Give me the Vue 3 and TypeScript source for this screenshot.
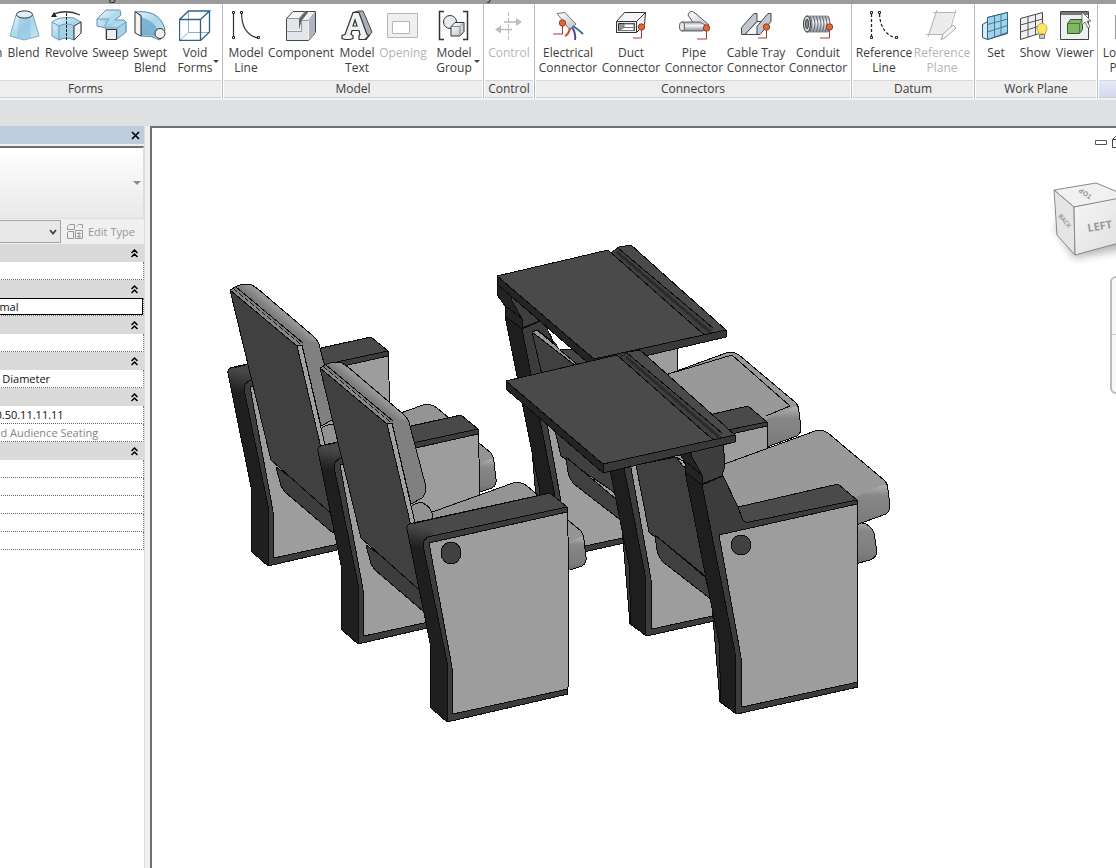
<script setup lang="ts">
import { ref } from 'vue'

interface Tool {
  icon: string
  lines: string[]
  width: number
  disabled?: boolean
  menu?: boolean
}

interface Panel {
  title: string
  tools: Tool[]
  gutter?: number
  active?: boolean
}

const panels: Panel[] = [
  {
    title: 'Forms',
    tools: [
      { icon: 'blend', lines: ['Extrusion'], width: 54 },
      { icon: 'blend', lines: ['Blend'], width: 41 },
      { icon: 'revolve', lines: ['Revolve'], width: 45 },
      { icon: 'sweep', lines: ['Sweep'], width: 43 },
      { icon: 'swept', lines: ['Swept', 'Blend'], width: 36 },
      { icon: 'void', lines: ['Void', 'Forms'], width: 54, menu: true },
    ],
  },
  {
    title: 'Model',
    tools: [
      { icon: 'line', lines: ['Model', 'Line'], width: 46 },
      { icon: 'component', lines: ['Component'], width: 64 },
      { icon: 'text', lines: ['Model', 'Text'], width: 48 },
      { icon: 'opening', lines: ['Opening'], width: 44, disabled: true },
      { icon: 'group', lines: ['Model', 'Group'], width: 58, menu: true },
    ],
  },
  {
    title: 'Control',
    tools: [{ icon: 'control', lines: ['Control'], width: 50, disabled: true }],
  },
  {
    title: 'Connectors',
    gutter: 2,
    tools: [
      { icon: 'electrical', lines: ['Electrical', 'Connector'], width: 62 },
      { icon: 'duct', lines: ['Duct', 'Connector'], width: 64 },
      { icon: 'pipe', lines: ['Pipe', 'Connector'], width: 62 },
      { icon: 'tray', lines: ['Cable Tray', 'Connector'], width: 62 },
      { icon: 'conduit', lines: ['Conduit', 'Connector'], width: 62 },
    ],
  },
  {
    title: 'Datum',
    gutter: 3,
    tools: [
      { icon: 'refline', lines: ['Reference', 'Line'], width: 58 },
      { icon: 'refplane', lines: ['Reference', 'Plane'], width: 58, disabled: true },
    ],
  },
  {
    title: 'Work Plane',
    gutter: 2,
    tools: [
      { icon: 'set', lines: ['Set'], width: 38 },
      { icon: 'show', lines: ['Show'], width: 40 },
      { icon: 'viewer', lines: ['Viewer'], width: 40 },
    ],
  },
  {
    title: '',
    active: true,
    gutter: 1,
    tools: [{ icon: 'load', lines: ['Load into', 'Project'], width: 60 }],
  },
]

interface Row {
  kind: 'head' | 'value'
  value?: string
  focus?: boolean
  locked?: boolean
}

const rows = ref<Row[]>([
  { kind: 'head' },
  { kind: 'value', value: '' },
  { kind: 'head' },
  { kind: 'value', value: 'Normal', focus: true },
  { kind: 'head' },
  { kind: 'value', value: '' },
  { kind: 'head' },
  { kind: 'value', value: 'Use Diameter' },
  { kind: 'head' },
  { kind: 'value', value: '3.40.50.11.11.11' },
  { kind: 'value', value: 'Fixed Audience Seating', locked: true },
  { kind: 'head' },
  { kind: 'value', value: '' },
  { kind: 'value', value: '' },
  { kind: 'value', value: '' },
  { kind: 'value', value: '' },
  { kind: 'value', value: '' },
])
</script>

<template>
  <div class="app">
    <svg class="defs" width="0" height="0" aria-hidden="true">
      <defs>
        <linearGradient id="blue" x1="0" y1="0" x2="1" y2="1">
          <stop offset="0" stop-color="#e6f5fc" />
          <stop offset="0.5" stop-color="#a9d5ea" />
          <stop offset="1" stop-color="#cfe9f5" />
        </linearGradient>
        <linearGradient id="steel" x1="0" y1="0" x2="1" y2="1">
          <stop offset="0" stop-color="#ffffff" />
          <stop offset="1" stop-color="#b9bfc8" />
        </linearGradient>
        <linearGradient id="tube" x1="0" y1="0" x2="0" y2="1">
          <stop offset="0" stop-color="#9aa0a9" />
          <stop offset="0.4" stop-color="#f6f7f9" />
          <stop offset="1" stop-color="#868c96" />
        </linearGradient>
      </defs>
      <symbol id="blend" viewBox="0 0 32 32">
        <path d="M8 6 2 27l14 4 15-4-6-21z" fill="url(#blue)" stroke="#7fa9bf" />
        <path d="M11 9 9 29l7 2 7-2-1-20z" fill="#7fbcdb" opacity=".4" />
        <ellipse cx="16.5" cy="5.5" rx="8" ry="3.6" fill="#dff0f8" stroke="#333" />
      </symbol>
      <symbol id="revolve" viewBox="0 0 32 32">
        <path d="M3 5Q16 0 29 6" fill="none" stroke="#333" stroke-width="1.3" />
        <path d="M0 8 3 3l3 5z" fill="#222" />
        <path d="M1 13Q8 7 23 9l7 4v10l-7 8Q16 27 8 31l-7-4z" fill="url(#blue)" stroke="#6b9bb6" />
        <path d="M1 13l7 4q8-4 15 0v14Q15 27 8 31V17" fill="#a3d1e7" stroke="#6b9bb6" />
        <path d="M23 17l7-4v11l-7 7z" fill="#f5f5f5" stroke="#333" />
        <path d="M15.5 4v27" stroke="#222" stroke-dasharray="3 1" />
      </symbol>
      <symbol id="sweep" viewBox="0 0 32 32">
        <path d="M2 10 11 1h14l1 5-6 5h9l2 2v10l-9 7H11V19l-9-2z" fill="url(#blue)" stroke="#5f93b0" />
        <path d="M2 10h12l-4 6v3h12l9-6v10l-9 7V19" fill="#8fc4df" fill-opacity=".5" stroke="#6ea5c2" />
        <path d="M14 10 25 1" fill="none" stroke="#a9cfe2" />
        <path d="M11.5 20.500h10v10h-10z" fill="#eee" stroke="#333" />
      </symbol>
      <symbol id="swept" viewBox="0 0 32 32">
        <path d="M7 6 1 3q25-3 30 18l-5 10q-9-5-19-4z" fill="url(#blue)" stroke="#4a84a4" />
        <path d="M7 8q12 3 18 14l-4 6q-7-3-14-1z" fill="#5799c0" opacity=".6" />
        <path d="M1 2.500 7 7v20l-6-3z" fill="#f4f4f4" stroke="#333" />
        <circle cx="26" cy="24.500" r="5" fill="#f2f2f2" stroke="#333" />
      </symbol>
      <symbol id="void" viewBox="0 0 32 32">
        <path d="M9.500 23.500 0.500 31.500M9.500 2v21.500h21" fill="none" stroke="#7db5d2" />
        <path d="M.5 10.500h21v21H.5zM.5 10.500l9-8.500h21l-9 8.500M30.500 2v21l-9 8.500" fill="none" stroke="#2e6384" stroke-width="1.300" />
      </symbol>
      <symbol id="line" viewBox="0 0 32 32">
        <path d="M3.500 3v26M11.500 3q0 23 17 26" fill="none" stroke="#333" stroke-width="1.200" />
        <path d="M2.500 2.500h2v2h-2zM2.500 27.500h2v2h-2zM10.500 2.500h2v2h-2zM27.500 27.500h2v2h-2z" fill="#fff" stroke="#222" />
      </symbol>
      <symbol id="component" viewBox="0 0 32 32">
        <path d="M1.500 9.500 8 2.500h22.500v21l-7 8h-22z" fill="#f1f3f5" stroke="#444" />
        <path d="M24 12l6-8v19l-6 7z" fill="#aeb4be" />
        <path d="M2 10h12v11H2z" fill="#e2e5ea" />
        <path d="M2 23h14v-11h7v19H2z" fill="#e2e5ea" />
        <path d="M1.500 9.500h12.500l6-7M1.500 22.500h15v-11l7-9M16.500 11.500h7l7-9" fill="none" stroke="#999" />
        <path d="M14 21 16.500 11.500 23 3 20 3 14 10z" fill="#5d636d" />
      </symbol>
      <symbol id="text" viewBox="0 0 32 32">
        <path d="M12 3.500 17 2h5l9 21-6 8z" fill="#aab0ba" stroke="#444" />
        <path
          fill-rule="evenodd"
          d="M1 29.500v-3l3-1L12 3.500h6l8 22 2 1-4 4h-6v-4l1-1-1-4h-7l-1 4 2 1v3l-3 1H4zM12 17h4l-2-6z"
          fill="#f0f2f5"
          stroke="#333"
          stroke-width="1.200"
        />
      </symbol>
      <symbol id="opening" viewBox="0 0 32 32">
        <path d="M.5 4.500h30v24H.5z" fill="#efefef" stroke="#b7b7b7" />
        <path d="M5.500 12.500h17v12h-17z" fill="#fff" stroke="#b7b7b7" />
      </symbol>
      <symbol id="group" viewBox="0 0 32 32">
        <path d="M6 2.500H1.500v28H6M25 2.500h4.500v28H25" fill="none" stroke="#333" stroke-width="1.500" />
        <circle cx="12" cy="13" r="6.500" fill="#e9edf2" stroke="#333" />
        <path d="M13 17.500l4-4h9v9l-4 4.500h-9z" fill="url(#steel)" stroke="#333" />
        <path d="M13 17.500h9l4-4M22 17.500V27" fill="none" stroke="#888" />
      </symbol>
      <symbol id="control" viewBox="0 0 32 32">
        <path d="M15.500 3v28" stroke="#bbb" stroke-dasharray="4 2" />
        <path d="M11 13h13M7 20.500h12" stroke="#bbb" stroke-width="1.300" />
        <path d="M29 13l-6-4v8zM2 20.500l6-4v8z" fill="#bbb" />
      </symbol>
      <symbol id="electrical" viewBox="0 0 32 32">
        <path d="M5 4.500l8-1L24 15l-6 6z" fill="url(#steel)" stroke="#777" />
        <path d="M21 17q6 4 10 8" fill="none" stroke="#2b779b" stroke-width="2" />
        <path d="M20 18q4 6 3 13" fill="none" stroke="#5b4696" stroke-width="2" />
        <path d="M18 19q-1 6-5 8" fill="none" stroke="#d6453c" stroke-width="2" />
        <path d="M10.500 14v11H1" fill="none" stroke="#a33c2c" />
        <circle cx="10.500" cy="14" r="3.200" fill="#dd6a3a" stroke="#983b20" />
      </symbol>
      <symbol id="duct" viewBox="0 0 32 32">
        <path d="M1.500 12.500l8-9h21l-1 12-8 8h-20z" fill="#f4f5f7" stroke="#333" />
        <path d="M1.500 12.500h20v11h-20zM21.500 12.500l9-9" fill="#e9ebee" stroke="#333" />
        <path d="M3.500 14.500h16v7h-16z" fill="#8b929c" stroke="#333" />
        <path d="M9 15h10v3.500H9zM4 21.500l5-3h10v3z" fill="#fff" stroke="#777" />
        <path d="M26.500 18v11H18" fill="none" stroke="#a33c2c" />
        <circle cx="26.500" cy="18" r="3.200" fill="#dd6a3a" stroke="#983b20" />
      </symbol>
      <symbol id="pipe" viewBox="0 0 32 32">
        <path d="M10 6q2-6 7-2l14 12-6 6-9-7z" fill="url(#steel)" stroke="#555" />
        <path d="M4 13h18l7 4-4 5H4q-4-4 0-9z" fill="url(#tube)" stroke="#666" />
        <ellipse cx="4" cy="17.500" rx="2.500" ry="4.500" fill="#e6e9ed" stroke="#555" />
        <path d="M28.500 19v11H19" fill="none" stroke="#a33c2c" />
        <circle cx="28.500" cy="19" r="3.200" fill="#dd6a3a" stroke="#983b20" />
      </symbol>
      <symbol id="tray" viewBox="0 0 32 32">
        <path d="M1.500 18.500 14 4.500h3v8L5 25.500H1.500z" fill="#c3c8d0" stroke="#444" />
        <path d="M5 25.500 17 12.500h6l-6 13z" fill="#f3f4f6" stroke="#444" />
        <path d="M17 17.500l11-13h3v8L20 25.500h-3z" fill="#c3c8d0" stroke="#444" />
        <path d="M26.500 18v11H18" fill="none" stroke="#a33c2c" />
        <circle cx="26.500" cy="18" r="3.200" fill="#dd6a3a" stroke="#983b20" />
      </symbol>
      <symbol id="conduit" viewBox="0 0 32 32">
        <path d="M4 6.500h22q5 9 0 17H4z" fill="url(#tube)" />
        <path d="M8 7q4 8 0 16M11 7q4 8 0 16M14 7q4 8 0 16M17 7q4 8 0 16M20 7q4 8 0 16M23 7q4 8 0 16M26 7q4 8 0 16" fill="none" stroke="#5c616a" />
        <ellipse cx="5" cy="15" rx="3.500" ry="8" fill="#d9dce0" stroke="#333" />
        <ellipse cx="5" cy="15" rx="1.500" ry="5" fill="#8a8f98" stroke="#444" />
        <path d="M27.500 18v11H18" fill="none" stroke="#a33c2c" />
        <circle cx="27.500" cy="18" r="3.200" fill="#dd6a3a" stroke="#983b20" />
      </symbol>
      <symbol id="refline" viewBox="0 0 32 32">
        <path d="M3.500 5v22M11.500 5q1 20 17 24" fill="none" stroke="#222" stroke-width="1.300" stroke-dasharray="3 2" />
        <path d="M2.500 2.500h2v2h-2zM2.500 27.500h2v2h-2zM10.500 2.500h2v2h-2zM27.500 27.500h2v2h-2z" fill="#fff" stroke="#222" />
      </symbol>
      <symbol id="refplane" viewBox="0 0 32 32">
        <path d="M9 4h19l-7 21H2z" fill="#ececec" />
        <path d="M7 3.500h23M0 25.500h20M11 1 2 28M30 1l-6 20" fill="none" stroke="#b4b4b4" />
        <path d="M15 31l2-6 10-9 3 3-10 9z" fill="#f4f4f4" stroke="#aaa" />
      </symbol>
      <symbol id="set" viewBox="0 0 32 32">
        <path d="M2.500 15.500l5-3v-4l20-5v21l-20 6-5-2z" fill="#d8edf7" stroke="#29536b" />
        <path d="M7.500 8.500l20-5v20l-20 7z" fill="#a3d3ea" stroke="#34647f" />
        <path d="M14.500 7v21.500M21 5v21.500M7.500 15.500l20-5.500M7.500 23l20-6.500" fill="none" stroke="#3f7a9b" />
      </symbol>
      <symbol id="show" viewBox="0 0 32 32">
        <path d="M1.500 9.500l22-6v20l-22 7z" fill="#eff0f2" stroke="#444" />
        <path d="M9 7v21M16.500 5v21M1.500 16l22-6M1.500 23l22-7" fill="none" stroke="#555" />
        <path d="M19.500 23a5 5 0 1 1 7 0v2h-7z" fill="#ffe564" stroke="#c9a63c" />
        <path d="M20.500 25.500h5v4h-5z" fill="#c8c8c8" stroke="#777" />
      </symbol>
      <symbol id="viewer" viewBox="0 0 32 32">
        <path d="M1.500 2.500h28v28h-28z" fill="#eff0f2" stroke="#444" />
        <path d="M2 3h27v3H2z" fill="#74797f" />
        <path d="M8.500 14.500l3-4h12v10l-3 4h-12z" fill="#82b765" stroke="#35592a" />
        <path d="M8.500 14.500h12l3-4M20.500 14.500v10" fill="none" stroke="#4e7a3e" />
        <path d="M23 3v13l3-3 3 6 2-1-3-6h4z" fill="#fff" stroke="#555" stroke-width=".8" />
      </symbol>
      <symbol id="load" viewBox="0 0 32 32">
        <path d="M3 6h6v24H3z" fill="#777b82" stroke="#333" />
        <path d="M3 12h6M3 18h6M3 24h6" stroke="#eee" />
        <path d="M9 8h20v22H9z" fill="#e5e8ee" stroke="#555" />
      </symbol>
    </svg>

    <div class="tabs" aria-hidden="true"><span>g</span><span>y</span></div>

    <header class="ribbon">
      <section v-for="(panel, p) in panels" :key="p" class="panel" :class="{ active: panel.active }">
        <div class="tools" :style="{ paddingInline: (panel.gutter ?? 0) + 'px' }">
          <button
            v-for="(tool, t) in panel.tools"
            :key="t"
            type="button"
            class="tool"
            :disabled="tool.disabled"
            :style="{ width: tool.width + 'px' }"
          >
            <svg class="icon" aria-hidden="true"><use :href="'#' + tool.icon" /></svg>
            <span v-for="line in tool.lines" :key="line" class="line">{{ line }}</span>
            <i v-if="tool.menu" class="caret"></i>
          </button>
        </div>
        <h2>{{ panel.title }}</h2>
      </section>
    </header>
    <div class="options"></div>

    <main class="work">
      <aside class="palette">
        <div class="caption">
          <button type="button" class="close" aria-label="Close">
            <svg width="9" height="9" viewBox="0 0 9 9"><path d="M1 1l7 7M8 1 1 8" stroke="#000" stroke-width="1.700" /></svg>
          </button>
        </div>
        <button type="button" class="type" aria-label="Type selector"><i></i></button>
        <div class="filter">
          <span class="pick">
            <select aria-label="Category filter"><option></option></select>
            <svg width="8" height="6" viewBox="0 0 8 6"><path d="M1 1l3 3.500L7 1" fill="none" stroke="#444" stroke-width="1.800" /></svg>
          </span>
          <button type="button" class="edit">
            <svg width="17" height="17" viewBox="0 0 17 17" fill="none" stroke="#999">
              <path d="M.5 3.500l2-2h5v5h-7zM9.500 3.500l2-2h4v4M.5 9.500l1-1h5v7h-6zM8.500 7.500h7v8h-7zM10 10.500h4M10 13.500h4M12 9v6" />
            </svg>
            Edit Type
          </button>
        </div>
        <table>
          <tbody>
            <tr v-for="(row, r) in rows" :key="r" :class="row.kind">
              <th v-if="row.kind === 'head'">
                <button type="button" aria-label="Collapse group">
                  <svg width="7" height="9" viewBox="0 0 7 9"><path d="M.5 4l3-3 3 3M.5 8l3-3 3 3" fill="none" stroke="#000" stroke-width="1.500" /></svg>
                </button>
              </th>
              <td v-else>
                <input
                  v-model="row.value"
                  type="text"
                  aria-label="Parameter value"
                  :class="{ focus: row.focus }"
                  :disabled="row.locked"
                />
              </td>
            </tr>
          </tbody>
        </table>
      </aside>

      <section class="view">
        <svg class="scene" viewBox="152 128 964 740" preserveAspectRatio="xMinYMin meet" role="img" aria-label="Seating model">
          <defs>
            <linearGradient id="front" x1="0" y1="0" x2="0" y2="1">
              <stop offset="0" stop-color="#b2b2b2" />
              <stop offset="0.25" stop-color="#878787" />
              <stop offset="0.8" stop-color="#7c7c7c" />
              <stop offset="1" stop-color="#696969" />
            </linearGradient>
            <linearGradient id="roll" gradientUnits="userSpaceOnUse" x1="366" y1="396" x2="376" y2="384">
              <stop offset="0" stop-color="#7b7b7b" />
              <stop offset="0.55" stop-color="#989898" />
              <stop offset="1" stop-color="#707070" />
            </linearGradient>
            <linearGradient id="bend" gradientUnits="userSpaceOnUse" x1="420" y1="527" x2="417" y2="548">
              <stop offset="0" stop-color="#484848" />
              <stop offset="1" stop-color="#1f1f1f" />
            </linearGradient>
            <g id="deskEnd">
              <path d="M702 485 723 476 738 507 838 484 857 500 858 687 737 714 720 702z" fill="#3c3c3c" />
              <path d="M685 472 702 485 735 652 736 714 721 702 719 643z" fill="#1e1e1e" />
              <path d="M738 507 838 484 857 500 749 522Q744 523 742 518z" fill="#4a4a4a" />
              <path d="M719 535 857 504 858 682 742 707 741 657z" fill="#9d9d9d" />
              <path d="M690 445 723 440 725 465 722 476 702 484 702 475 692 457z" fill="#3e3e3e" />
              <path d="M677 441 678 452 685 462 685 472 702 485 702 475 692 457 690 445z" fill="#232323" />
              <path d="M686 462 702 475" fill="none" />
              <circle cx="741" cy="545" r="10" fill="#414141" />
            </g>
            <g id="desk">
              <path d="M506 381 617 355 620 358 628 352 640 350 735 435 603 464z" fill="#4a4a4a" />
              <path d="M620 358 627 353 722 432 721 438 714 440 711 437z" fill="#3f3f3f" stroke="none" />
              <path d="M626 357 719 437" fill="none" stroke="#2b2b2b" stroke-width="3" />
              <path d="M627 353 722 433M617 355 711 438Q717 442 721 437" fill="none" />
              <path d="M603 464 735 435 735 442 603 473z" fill="#393939" />
              <path d="M506 381 603 464 603 473 506 389z" fill="#242424" />
            </g>
            <g id="deskPan">
              <path d="M655 535 705 577 712 600 663 562Q658 556 657 550z" fill="#404040" />
            </g>
            <g id="wideSeat">
              <path d="M700 473 815 431Q822 429 828 433L884 480Q888 484 888 490L890 506Q890 511 886 514L845 529 700 520z" fill="#999" />
              <path d="M845 502 882 485Q887 484 888 490L890 506Q890 511 886 514L845 529z" fill="url(#front)" stroke="none" />
              <path d="M828 433 884 480Q888 484 888 490L890 506Q890 511 886 514L845 529" fill="none" />
            </g>
            <g id="end">
              <path d="M407 529Q406 524 413 523L550 493 567 507 568 694 447 722 431 708 430 643z" fill="#3c3c3c" />
              <path d="M411 524 550 493 567 507 432 536Q424 537 423 544z" fill="#494949" />
              <path d="M407 529Q407 524 412 523L430 537Q423 537 423 545L447 662 447 722 431 708 430 643z" fill="#1f1f1f" stroke="none" />
              <path d="M407 529Q407 524 412 523L434 530 432 536Q423 537 423 545L427 565 413 562z" fill="url(#bend)" stroke="none" />
              <path d="M432 536Q423 537 423 545L447 662 447 722" fill="none" />
              <path d="M550 493 413 523Q406 524 407 529L430 643 431 708 447 722" fill="none" />
              <path d="M429 543 567 512 569 560 568 689 453 714 452 667z" fill="#9d9d9d" />
            </g>
            <g id="chair">
              <path d="M410 520 513 483Q521 481 527 486L581 531Q584 535 584 540L586 557Q587 563 582 566L570 570 500 560 410 535z" fill="#949494" />
              <path d="M556 549 580 537Q584 536 584 541L586 557Q587 563 582 566L570 570 556 570z" fill="url(#front)" stroke="none" />
              <path d="M527 486 581 531Q584 535 584 540L586 557Q587 563 582 566L570 570" fill="none" />
              <path d="M366 545 371 564 375 570 423 611 430 590z" fill="#3d3d3d" />
              <path d="M411 507Q415 502 423 503 433 508 433 520L414 526z" fill="#929292" />
              <path d="M320 368 387 424 413 526 425 595 361 538z" fill="#404040" />
              <path d="M387 424 392 423 415 523 411 526z" fill="#a1a1a1" />
              <path d="M320 368 324 366 392 423 387 424z" fill="#858585" />
              <path d="M323 366Q330 361 342 363L348 367 402 413Q409 419 410 426L426 487Q426 494 422 498L411 504 392 423z" fill="#808080" />
              <path d="M323 366Q330 361 342 363L348 367 402 413 407 420Q398 418 392 423z" fill="url(#roll)" stroke="none" />
              <path d="M323 366Q330 361 342 363L348 367 402 413Q409 419 410 426M326 365 393 421" fill="none" />
            </g>
          </defs>

          <g class="solid">
            <g class="right-block">
              <use href="#deskEnd" transform="translate(-180 -156)" />
              <path d="M532 332 537 330 640 405 640 510 561 456z" fill="#404040" />
              <path d="M532 332 537 330 580 366 576 366z" fill="#989898" />
              <path d="M548 330 556 329 573 349 560 350z" fill="#fff" stroke="none" />
              <path d="M560 350 574 349 600 370 584 370z" fill="#464646" />
              <use href="#deskPan" transform="translate(-89 -78)" />
              <use href="#desk" transform="translate(-9 -105)" />
              <use href="#wideSeat" transform="translate(-89 -78)" />
              <path d="M672 373 732 355 790 406 766 416" fill="none" />
              <use href="#deskEnd" transform="translate(-90 -78)" />
              <path d="M636 465 676 457 700 476 730 600 649 532z" fill="#404040" />
              <path d="M676 457 683 461 689 470 683 466z" fill="#aaa" />
              <use href="#deskPan" />
              <path d="M655 535 720 588" fill="none" />
              <path d="M850 520 866 524Q872 527 874 533L877 552Q877 557 870 560L855 564z" fill="url(#front)" />
              <use href="#wideSeat" />
              <use href="#deskEnd" />
              <use href="#desk" />
            </g>
            <g class="left-block">
              <use href="#end" transform="translate(-179 -156)" />
              <use href="#chair" transform="translate(-90 -78)" />
              <use href="#end" transform="translate(-89 -78)" />
              <use href="#chair" />
              <use href="#end" />
              <ellipse cx="451" cy="553" rx="10" ry="11" fill="#414141" />
            </g>
          </g>
        </svg>

        <div class="window-buttons">
          <button type="button" aria-label="Minimize"><svg width="12" height="5"><path d="M.5.5h11v4H.5z" fill="#fff" stroke="#555" /></svg></button>
          <button type="button" aria-label="Restore"><svg width="12" height="12"><path d="M3.500.5h8v8M.5 3.500h8v8h-8zM.5 3.500l3-3" fill="#fff" stroke="#444" /></svg></button>
        </div>

        <svg class="cube" width="76" height="100" viewBox="1040 168 76 100" aria-label="View cube">
          <defs>
            <filter id="haze" x="-30%" y="-30%" width="160%" height="160%"><feGaussianBlur stdDeviation="4" /></filter>
            <linearGradient id="cubeFace" x1="0" y1="0" x2="1" y2="1">
              <stop offset="0" stop-color="#f7f7f7" />
              <stop offset="1" stop-color="#dcdcdc" />
            </linearGradient>
          </defs>
          <path d="M1054 225 1074 258 1130 248 1116 220z" fill="#777" opacity=".55" filter="url(#haze)" />
          <path d="M1054 190 1096 183 1130 197 1074 207z" fill="#f1f1f1" stroke="#888" />
          <path d="M1054 190 1074 207 1075 255 1057 235z" fill="#e5e5e5" stroke="#888" />
          <path d="M1074 207 1130 196 1130 240 1075 255z" fill="url(#cubeFace)" stroke="#888" />
          <text x="1088" y="232" transform="rotate(-9 1088 232)" font-size="11">LEFT</text>
          <text x="1058" y="216" transform="rotate(50 1058 216)" font-size="6">BACK</text>
          <text x="1085" y="197" text-anchor="middle" transform="rotate(215 1085 194)" font-size="7">TOP</text>
        </svg>
        <div class="navbar"><span></span></div>
      </section>
    </main>
  </div>
</template>

<style>
html,
body,
#app {
  height: 100%;
}
body {
  overflow: hidden;
}
</style>

<style scoped>
.app {
  display: flex;
  flex-direction: column;
  height: 100%;
  overflow: hidden;
  background: #f0f0f0;
  color: #3c3c3c;
  font: 12px/15px 'Open Sans', 'Noto Sans', sans-serif;
}
.defs {
  position: absolute;
}
button,
input,
select {
  font: inherit;
  color: inherit;
  margin: 0;
  padding: 0;
  border: 0;
  border-radius: 0;
  background: none;
}
.tabs {
  display: flex;
  flex: none;
  gap: 370px;
  height: 4px;
  padding-left: 109px;
  overflow: hidden;
  background: #9c9c9c;
  color: #222;
}
.tabs span {
  width: 8px;
  margin-top: -12px;
}
.ribbon {
  display: flex;
  flex: none;
  margin-left: -51px;
  overflow: hidden;
  background: #fff;
}
.panel {
  flex: none;
  border-right: 1px solid #b9bbbe;
}
.panel.active {
  flex: 1 0 auto;
  border-right: 0;
}
.tools {
  display: flex;
  height: 76px;
}
.tool {
  position: relative;
  display: flex;
  flex: none;
  flex-direction: column;
  align-items: center;
  justify-content: flex-start;
  padding-top: 5px;
  white-space: nowrap;
}
.tool:disabled {
  color: #b4b4b4;
}
.icon {
  flex: none;
  width: 32px;
  height: 32px;
  margin-bottom: 4px;
}
.line {
  height: 15px;
}
.caret {
  position: absolute;
  right: 3px;
  top: 56px;
  border: 3px solid transparent;
  border-top-color: #444;
  border-bottom: 0;
}
h2 {
  height: 16px;
  margin: 0 1px;
  border-top: 1px solid #d8d8d8;
  border-bottom: 1px solid #d0d0d0;
  background: #eee;
  font: inherit;
  line-height: 16px;
  text-align: center;
}
.active h2 {
  background: linear-gradient(#e6e9f5, #d3daee);
}
.options {
  flex: none;
  height: 26px;
  border-top: 2px solid #f2f3f4;
  background: #dfe0e2;
}
.work {
  display: flex;
  flex: 1;
  min-height: 0;
}
.palette {
  flex: none;
  width: 144px;
  border-right: 1px solid #dcdcdc;
  overflow: hidden;
  background: #fff;
  font-size: 11px;
}
.caption {
  display: flex;
  align-items: center;
  justify-content: flex-end;
  height: 18px;
  padding-right: 4px;
  border-bottom: 2px solid #f0f0f0;
  background: #bfccdb;
}
.close {
  display: flex;
}
.type {
  display: flex;
  align-items: center;
  justify-content: flex-end;
  width: 100%;
  height: 73px;
  padding-right: 2px;
  border-top: 2px solid #707070;
  border-right: 1px solid #ddd;
  border-bottom: 1px solid #ddd;
  background: linear-gradient(#fff, #e9e9e9);
}
.type i {
  border: 4px solid transparent;
  border-top-color: #8c8c8c;
  border-bottom: 0;
}
.filter {
  display: flex;
  align-items: center;
  gap: 6px;
  height: 25px;
  background: #f0f0f0;
}
.pick {
  position: relative;
  flex: none;
  width: 61px;
  height: 23px;
}
.pick select {
  width: 100%;
  height: 100%;
  border: 1px solid #a5a5a5;
  border-left: 0;
  background: #e8e8e8;
  appearance: none;
}
.pick svg {
  position: absolute;
  right: 4px;
  top: 9px;
}
.edit {
  display: flex;
  align-items: center;
  gap: 4px;
  color: #979797;
  white-space: nowrap;
}
table {
  width: 168px;
  margin-left: -24px;
  border-collapse: separate;
  border-spacing: 0;
  table-layout: fixed;
}
tr {
  height: 18px;
}
th {
  height: 18px;
  padding: 0 6px 0 0;
  background: #dadada;
  text-align: right;
}
th button {
  display: flex;
  margin-left: auto;
}
td {
  height: 17px;
  padding: 0;
  border-right: 1px dotted #777;
  border-bottom: 1px dotted #666;
}
td input {
  display: block;
  box-sizing: border-box;
  width: 100%;
  height: 17px;
  padding-left: 4px;
  color: #111;
}
td input:disabled {
  color: #858585;
}
td input.focus {
  padding-left: 3px;
  border: 1px solid #000;
}
.view {
  position: relative;
  flex: 1;
  margin-left: 5px;
  border-top: 2px solid #707070;
  border-left: 2px solid #707070;
  overflow: hidden;
  background: #fff;
}
.scene {
  display: block;
  width: 100%;
  height: 100%;
}
.solid {
  stroke: #0c0c0c;
  stroke-width: 1;
  stroke-linejoin: round;
  shape-rendering: crispEdges;
}
.window-buttons {
  position: absolute;
  top: 8px;
  right: -8px;
  display: flex;
  align-items: center;
  gap: 5px;
}
.window-buttons button {
  display: flex;
}
.cube {
  position: absolute;
  top: 40px;
  right: 0;
}
.cube text {
  fill: #999;
  font-family: 'Open Sans', sans-serif;
  font-weight: 700;
}
.navbar {
  position: absolute;
  top: 148px;
  right: -30px;
  width: 32px;
  height: 114px;
  border: 2px solid #bbb;
  border-radius: 6px;
  background: #f8f8f8;
}
.navbar span {
  display: block;
  height: 56px;
  border-bottom: 1px solid #ccc;
}
</style>
